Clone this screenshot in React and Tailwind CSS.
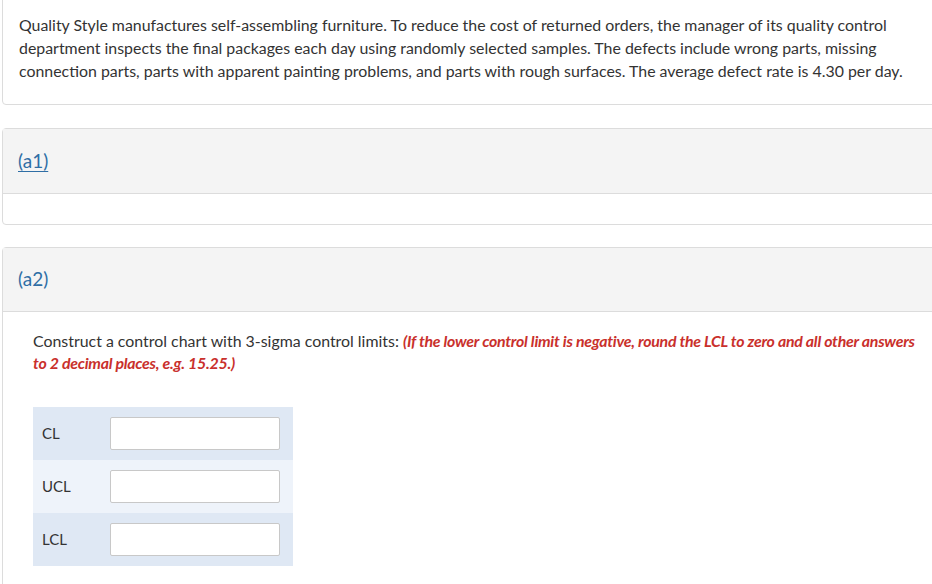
import React from 'react';

const rows = [
  { label: 'CL', bg: 'bg-[#dfe8f4]' },
  { label: 'UCL', bg: 'bg-[#eef3fa]' },
  { label: 'LCL', bg: 'bg-[#dfe8f4]' },
];

const App = () => {
  return (
    <div className="w-[932px] h-[584px] overflow-hidden bg-white text-[#333] font-['Lato','Liberation_Sans',sans-serif]">
      <div className="ml-[2px] -mr-3">
        <div className="-mt-[6px] border border-[#dcdcdc] rounded-[4px] pt-[18px] pb-[22px] pl-[16px]">
          <p className="text-[15.9px] leading-[23px] whitespace-nowrap">
            Quality Style manufactures self-assembling furniture. To reduce the cost of returned orders, the manager of its quality control
            <br />
            department inspects the final packages each day using randomly selected samples. The defects include wrong parts, missing
            <br />
            connection parts, parts with apparent painting problems, and parts with rough surfaces. The average defect rate is 4.30 per day.
          </p>
        </div>

        <div className="mt-[23px] border border-[#dcdcdc] rounded-[4px]">
          <div className="h-[65px] bg-[#f4f4f4] border-b border-[#dcdcdc] flex items-center pl-[15px]">
            <span className="text-[19px] text-[#2f6ea5] underline underline-offset-[3px]">(a1)</span>
          </div>
          <div className="h-[30px]" />
        </div>

        <div className="mt-[22px] border border-[#dcdcdc] rounded-[4px] h-[400px]">
          <div className="h-[64px] bg-[#f4f4f4] border-b border-[#dcdcdc] flex items-center pl-[15px]">
            <span className="text-[19px] text-[#2f6ea5]">(a2)</span>
          </div>
          <div className="pl-[30px] pt-[18px]">
            <p className="text-[15.9px] leading-[22px] whitespace-nowrap">
              Construct a control chart with 3-sigma control limits:{' '}
              <span className="text-[#c9302c] font-bold italic tracking-[-0.25px]">
                (If the lower control limit is negative, round the LCL to zero and all other answers
                <br />
                to 2 decimal places, e.g. 15.25.)
              </span>
            </p>
            <div className="mt-[33px] w-[260px]">
              {rows.map((r) => (
                <div key={r.label} className={`${r.bg} h-[53px] flex items-center`}>
                  <span className="w-[77px] pl-[9px] text-[15px]">{r.label}</span>
                  <input
                    type="text"
                    className="w-[170px] h-[33px] bg-white border border-[#c8c8c8] rounded-[2px] outline-none"
                  />
                </div>
              ))}
            </div>
          </div>
        </div>
      </div>
    </div>
  );
};

export default App;
